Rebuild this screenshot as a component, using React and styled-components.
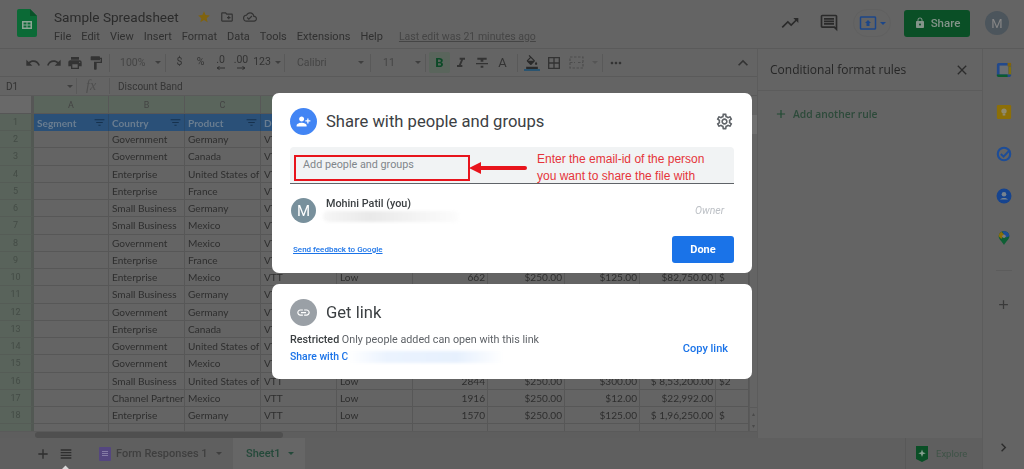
import React from 'react';
import styled, { createGlobalStyle } from 'styled-components';
import {
  MdAdd,
  MdBorderAll,
  MdChevronRight,
  MdClose,
  MdFilterList,
  MdFormatColorFill,
  MdFormatItalic,
  MdFormatPaint,
  MdFormatStrikethrough,
  MdKeyboardArrowUp,
  MdLink,
  MdLock,
  MdMoreHoriz,
  MdOutlineCloudDone,
  MdOutlineCreateNewFolder,
  MdOutlineInsertComment,
  MdOutlineSettings,
  MdPersonAddAlt1,
  MdPresentToAll,
  MdPrint,
  MdRedo,
  MdStar,
  MdTrendingUp,
  MdUndo,
  MdViewHeadline,
} from 'react-icons/md';

const GlobalStyle = createGlobalStyle`
  html, body {
    margin: 0;
    padding: 0;
    background: #666;
    overflow: hidden;
  }
  * { box-sizing: border-box; }
`;

const Page = styled.div`
  position: relative;
  width: 1024px;
  height: 469px;
  overflow: hidden;
  font-family: Roboto, "Liberation Sans", sans-serif;
`;

const Dimmed = styled.div`
  display: flex;
  flex-direction: column;
  width: 100%;
  height: 100%;
  background: #646464;
  color: #2a2a2a;
  filter: blur(0.45px);
`;

const Header = styled.header`
  display: flex;
  align-items: flex-start;
  flex: 0 0 49px;
  padding: 9px 15px 0 17px;
  border-bottom: 1px solid #5a5a5a;
`;

const Logo = styled.svg`
  width: 20px;
  height: 28px;
  margin-right: 17px;
  flex: none;
`;

const TitleBlock = styled.div`
  display: flex;
  flex-direction: column;
`;

const TitleRow = styled.div`
  display: flex;
  align-items: center;
  height: 15px;
  color: #333;
`;

const DocTitle = styled.span`
  width: 138px;
  font-size: 13.6px;
  color: #2b2b2b;
`;

const TitleIcon = styled.span`
  display: flex;
  justify-content: center;
  width: 23px;
  font-size: 14px;
  color: ${(p) => p.$color || '#333'};
`;

const MenuRow = styled.nav`
  display: flex;
  align-items: center;
  gap: 10px;
  margin-top: 6px;
  font-size: 11px;
  color: #303030;
`;

const LastEdit = styled.span`
  margin-left: 6px;
  font-size: 10.5px;
  color: #454545;
  text-decoration: underline;
`;

const HeaderRight = styled.div`
  display: flex;
  align-items: center;
  margin-left: auto;
  height: 28px;
`;

const HeaderIcon = styled.span`
  display: flex;
  justify-content: center;
  width: 39px;
  font-size: 20px;
  color: #2a2a2a;
`;

const PresentPill = styled.span`
  display: flex;
  align-items: center;
  justify-content: center;
  width: 38px;
  height: 28px;
  margin: 0 13px 0 5px;
  border: 1px solid #606060;
  border-radius: 14px;
  font-size: 18px;
  color: #1c4688;
`;

const TinyCaret = styled.span`
  display: inline-block;
  width: 0;
  height: 0;
  margin-left: 3px;
  border-left: 3px solid transparent;
  border-right: 3px solid transparent;
  border-top: 3px solid ${(p) => p.$color || '#3f3f3f'};
`;

const ShareButton = styled.span`
  display: flex;
  align-items: center;
  justify-content: center;
  gap: 5px;
  width: 66px;
  height: 27px;
  border-radius: 3px;
  background: #0a4f26;
  color: #84948a;
  font-size: 11.5px;
  font-weight: 500;
  svg { font-size: 12px; }
`;

const Avatar = styled.span`
  display: flex;
  align-items: center;
  justify-content: center;
  flex: none;
  width: ${(p) => p.$size}px;
  height: ${(p) => p.$size}px;
  border-radius: 50%;
  background: ${(p) => p.$bg};
  color: ${(p) => p.$fg};
  font-size: ${(p) => p.$font}px;
`;

const HeaderAvatar = styled(Avatar)`
  margin-left: 15px;
`;

const Workspace = styled.div`
  display: flex;
  flex: 1;
  min-height: 0;
`;

const LeftColumn = styled.div`
  display: flex;
  flex-direction: column;
  width: 982px;
`;

const UpperRow = styled.div`
  display: flex;
  flex: 1;
  min-height: 0;
`;

const Main = styled.main`
  display: flex;
  flex-direction: column;
  width: 757px;
`;

const Toolbar = styled.div`
  display: flex;
  align-items: center;
  flex: 0 0 28px;
  padding-left: 22px;
  border-bottom: 1px solid #5a5a5a;
  color: #303030;
`;

const Tool = styled.span`
  display: flex;
  flex-direction: column;
  align-items: center;
  justify-content: center;
  flex: none;
  width: ${(p) => p.$w || 21}px;
  height: 21px;
  font-size: ${(p) => p.$size || 16}px;
  font-weight: ${(p) => (p.$bold ? 700 : 400)};
  line-height: 1;
  color: ${(p) => p.$color || '#333'};
  background: ${(p) => p.$bg || 'transparent'};
  border-radius: 2px;
`;

const ToolLabel = styled.span`
  flex: none;
  width: ${(p) => p.$w}px;
  font-size: 10.5px;
  color: #454545;
`;

const ToolSep = styled.span`
  flex: none;
  width: 1px;
  height: 18px;
  margin: 0 ${(p) => p.$r}px 0 ${(p) => p.$l}px;
  background: #595959;
`;

const ChevronTool = styled(Tool)`
  margin: 0 3px 0 auto;
`;

const FillIcon = styled.span`
  display: flex;
  flex-direction: column;
  align-items: center;
  font-size: 14px;
  color: #2a2a2a;
  &::after {
    content: '';
    width: 16px;
    height: 2px;
    background: #2a5470;
  }
`;

const FormulaBar = styled.div`
  display: flex;
  align-items: center;
  flex: 0 0 19px;
  padding-left: 6px;
  border-bottom: 1px solid #5a5a5a;
  font-size: 10px;
  color: #333;
`;

const NameBox = styled.span`
  display: flex;
  align-items: center;
  justify-content: space-between;
  width: 67px;
  margin-right: 3px;
`;

const FormulaSep = styled.span`
  width: 1px;
  height: 16px;
  background: #5a5a5a;
`;

const Fx = styled.span`
  width: 32px;
  padding-left: 9px;
  font-family: "Liberation Serif", serif;
  font-style: italic;
  font-size: 14px;
  color: #4f4f4f;
`;

const FormulaText = styled.span`
  padding-left: 8px;
  color: #353535;
`;

const SheetArea = styled.div`
  display: flex;
  flex: 1;
  min-height: 0;
`;

const Sheet = styled.div`
  flex: 0 0 749px;
  display: grid;
  grid-template-columns: 34px 75px 76px 76px 76px 76px 75px 77px 75px 76px 33px;
  grid-template-rows: 18px 17px;
  grid-auto-rows: 17.25px;
  overflow: hidden;
  font-family: Lato, "Liberation Sans", sans-serif;
  font-size: 10.1px;
  color: #2e2e2e;
`;

const Corner = styled.div`
  background: #696969;
  border-right: 3px solid #565656;
  border-bottom: 1px solid #565656;
`;

const ColumnHead = styled.div`
  display: flex;
  align-items: center;
  justify-content: center;
  background: ${(p) => (p.$active ? '#5a655c' : '#646464')};
  border-right: 1px solid #575757;
  border-bottom: 1px solid #575757;
  font-family: Roboto, sans-serif;
  font-size: 9px;
  color: #444;
`;

const RowHead = styled.div`
  display: flex;
  align-items: center;
  justify-content: center;
  background: #59635b;
  border-right: 3px solid #525853;
  border-bottom: 1px solid #555c56;
  font-family: Roboto, sans-serif;
  font-size: 9px;
  color: #444c46;
`;

const Cell = styled.div`
  display: flex;
  align-items: center;
  justify-content: ${(p) => (p.$right ? 'flex-end' : 'flex-start')};
  padding: ${(p) => (p.$right ? '0 2px' : '0 0 0 3px')};
  white-space: nowrap;
  border-right: 1px solid #575757;
  border-bottom: 1px solid #575757;
`;

const BandCell = styled.div`
  display: flex;
  align-items: center;
  justify-content: space-between;
  padding: 0 2px 0 3px;
  background: #2a5078;
  border-right: 1px solid #294868;
  font-weight: 700;
  color: #6a7d90;
  white-space: nowrap;
  overflow: hidden;
  svg { flex: none; font-size: 13px; color: #16314d; }
`;

const ScrollColumn = styled.div`
  display: flex;
  flex-direction: column;
  flex: 0 0 8px;
  border-left: 1px solid #5a5a5a;
`;

const ScrollThumb = styled.div`
  height: 19px;
  margin-top: 19px;
  background: #707070;
`;

const ScrollArrows = styled.div`
  display: flex;
  flex-direction: column;
  justify-content: space-around;
  align-items: center;
  margin-top: auto;
  height: 24px;
  border-top: 1px solid #5a5a5a;
  font-size: 6px;
  color: #4a4a4a;
`;

const HScroll = styled.div`
  display: flex;
  flex: 0 0 7px;
  padding-left: 35px;
  background: #5e5e5e;
  border-top: 1px solid #5a5a5a;
`;

const HThumb = styled.div`
  width: 248px;
  height: 6px;
  border-radius: 3px;
  background: #4f4f4f;
`;

const SidePanel = styled.aside`
  display: flex;
  flex-direction: column;
  width: 225px;
  border-left: 1px solid #5c5c5c;
`;

const PanelHead = styled.div`
  display: flex;
  align-items: center;
  justify-content: space-between;
  flex: 0 0 42px;
  padding: 0 12px;
  border-bottom: 1px solid #5c5c5c;
  font-family: "Open Sans", sans-serif;
  font-size: 12px;
  font-weight: 500;
  color: #262626;
  svg { font-size: 16px; color: #2c2c2c; }
`;

const AddRule = styled.div`
  display: flex;
  align-items: center;
  gap: 5px;
  padding: 16px 0 0 16px;
  font-family: "Open Sans", sans-serif;
  font-size: 10.3px;
  font-weight: 600;
  color: #2d4a3a;
  svg { font-size: 14px; color: #204a32; }
`;

const TabBar = styled.footer`
  display: flex;
  align-items: center;
  flex: 0 0 31px;
  background: #5f5f5f;
  font-size: 11px;
`;

const TabTool = styled.span`
  position: relative;
  display: flex;
  justify-content: center;
  width: 23px;
  font-size: 16px;
  color: #2e2e2e;
`;

const AddSheet = styled(TabTool)`
  margin-left: 31px;
`;

const ListNotch = styled.span`
  position: absolute;
  left: 8px;
  bottom: -12px;
  width: 7px;
  height: 7px;
  background: #d8d8d8;
  transform: rotate(45deg);
`;

const TabItem = styled.div`
  display: flex;
  align-items: center;
  gap: 5px;
  height: 100%;
  background: ${(p) => (p.$active ? '#666' : 'transparent')};
  font-weight: 500;
  color: ${(p) => (p.$active ? '#24493a' : '#3f3f3f')};
`;

const FormTab = styled(TabItem)`
  width: 156px;
  padding-left: 22px;
`;

const SheetTab = styled(TabItem)`
  width: 72px;
  padding-left: 13px;
`;

const FormBadge = styled.span`
  display: flex;
  flex-direction: column;
  justify-content: center;
  gap: 1px;
  width: 12px;
  height: 14px;
  padding: 0 3px;
  border-radius: 1px;
  background: #54467f;
  i { height: 1px; background: #857ca6; }
`;

const ExploreBox = styled.div`
  display: flex;
  align-items: center;
  gap: 8px;
  height: 100%;
  margin-left: auto;
  width: 77px;
  padding-left: 10px;
  border-left: 1px solid #585858;
  font-size: 9.5px;
  color: #3f5347;
`;

const Rail = styled.div`
  display: flex;
  flex-direction: column;
  align-items: center;
  width: 42px;
  border-left: 1px solid #5c5c5c;
  padding-top: 13px;
`;

const RailIcon = styled.svg`
  width: 16px;
  height: 16px;
  margin-bottom: 26px;
  flex: none;
`;

const RailLine = styled.span`
  width: 16px;
  height: 1px;
  margin-top: -2px;
  background: #5c5c5c;
`;

const RailAdd = styled.span`
  display: flex;
  margin-top: 26px;
  font-size: 15px;
  color: #3a3a3a;
`;

const RailChevron = styled.span`
  display: flex;
  margin-top: auto;
  margin-bottom: 13px;
  font-size: 17px;
  color: #2c2c2c;
`;

/* the two share dialogs float over the dimmed sheet */
const Overlay = styled.div`
  position: absolute;
  inset: 0;
  display: flex;
  flex-direction: column;
  gap: 11px;
  padding: 93px 0 0 272px;
  filter: blur(0.3px);
`;

const Card = styled.section`
  display: flex;
  flex-direction: column;
  width: 480px;
  height: ${(p) => p.$h}px;
  padding: 14px 18px 0;
  background: #fff;
  border-radius: 7px;
`;

const CardHead = styled.div`
  display: flex;
  align-items: center;
  gap: 9px;
  height: 28px;
`;

const CircleIcon = styled.span`
  display: flex;
  align-items: center;
  justify-content: center;
  width: 27px;
  height: 27px;
  border-radius: 50%;
  background: ${(p) => p.$bg};
  color: #fff;
  font-size: 15px;
`;

const CardTitle = styled.h2`
  margin: 1px 0 0;
  font-size: 16.6px;
  font-weight: 400;
  color: #3c4043;
`;

const GearIcon = styled.span`
  display: flex;
  margin-left: auto;
  font-size: 19px;
  color: #5f6368;
`;

const InviteBox = styled.div`
  position: relative;
  height: 37px;
  margin-top: 12px;
  padding: 11px 0 0 13px;
  background: #f1f3f4;
  border-bottom: 1px solid #5f6368;
  border-radius: 4px 4px 0 0;
  font-size: 10.8px;
  color: #80868b;
`;

const RedFrame = styled.span`
  position: absolute;
  left: 4px;
  top: 8px;
  width: 176px;
  height: 26px;
  border: 2px solid #e8141c;
`;

const RedArrow = styled.svg`
  position: absolute;
  left: 179px;
  top: 14px;
  width: 58px;
  height: 14px;
`;

const RedNote = styled.p`
  position: absolute;
  left: 247px;
  top: 4px;
  margin: 0;
  font-family: "Liberation Sans", Arial, sans-serif;
  font-size: 12px;
  line-height: 17px;
  color: #e5333a;
`;

const PersonRow = styled.div`
  display: flex;
  align-items: center;
  gap: 10px;
  margin-top: 14px;
  padding-left: 1px;
`;

const PersonInfo = styled.div`
  display: flex;
  flex-direction: column;
  width: 340px;
  margin-top: -3px;
`;

const PersonName = styled.span`
  font-size: 10.8px;
  font-weight: 500;
  color: #3c4043;
`;

const SmudgedEmail = styled.span`
  width: 136px;
  height: 11px;
  margin: 1px 0 0 -3px;
  border-radius: 5px;
  background: linear-gradient(90deg, #f6f6f6 0%, #e9e9e9 35%, #f4f4f4 70%, #fcfcfc 100%);
  filter: blur(1.5px);
`;

const OwnerTag = styled.span`
  margin-left: 19px;
  font-size: 10.5px;
  font-style: italic;
  color: #bdc1c6;
`;

const CardFoot = styled.div`
  display: flex;
  align-items: center;
  justify-content: space-between;
  margin-top: 13px;
`;

const FeedbackLink = styled.a`
  padding-left: 3px;
  font-size: 8px;
  font-weight: 500;
  color: #1a73e8;
  text-decoration: underline;
`;

const DoneButton = styled.button`
  width: 62px;
  height: 27px;
  padding: 0;
  border: 0;
  border-radius: 3px;
  background: #1a73e8;
  font-family: Roboto, sans-serif;
  font-size: 11px;
  font-weight: 700;
  color: #fff;
`;

const LinkBody = styled.div`
  display: flex;
  align-items: center;
  justify-content: space-between;
  margin-top: 7px;
  padding-right: 6px;
`;

const LinkText = styled.div`
  display: flex;
  flex-direction: column;
  gap: 4px;
  font-size: 10.75px;
  color: #5f6368;
  strong { font-weight: 500; color: #3c4043; }
`;

const ShareWith = styled.span`
  display: flex;
  align-items: center;
  font-size: 10.4px;
  font-weight: 500;
  color: #1a73e8;
`;

const SmudgedLink = styled.span`
  width: 155px;
  height: 12px;
  background: linear-gradient(90deg, #fff 0%, #ebf3fe 25%, #e6f0fd 70%, #fff 100%);
  filter: blur(1.5px);
`;

const CopyLink = styled.span`
  font-size: 11px;
  font-weight: 500;
  color: #1a73e8;
`;

const COLUMNS = ['A', 'B', 'C', 'D', 'E', 'F', 'G', 'H', 'I', 'J'];

// segment, product, band, discount, units, price, cost, sales, next column
const ROWS = [
  ['Government', 'Germany', 'VTT'],
  ['Government', 'Canada', 'VTT'],
  ['Enterprise', 'United States of', 'VTT'],
  ['Enterprise', 'France', 'VTT'],
  ['Small Business', 'Germany', 'VTT'],
  ['Small Business', 'Mexico', 'VTT'],
  ['Government', 'Mexico', 'VTT'],
  ['Enterprise', 'France', 'VTT'],
  ['Enterprise', 'Mexico', 'VTT', 'Low', '662', '$250.00', '$125.00', '$82,750.00', '$'],
  ['Small Business', 'Germany', 'VTT'],
  ['Government', 'Germany', 'VTT'],
  ['Enterprise', 'Canada', 'VTT'],
  ['Government', 'United States of', 'VTT'],
  ['Government', 'Mexico', 'VTT'],
  ['Small Business', 'United States of', 'VTT', 'Low', '2844', '$250.00', '$300.00', '$ 8,53,200.00', '$2'],
  ['Channel Partner', 'Mexico', 'VTT', 'Low', '1916', '$250.00', '$12.00', '$22,992.00'],
  ['Enterprise', 'Germany', 'VTT', 'Low', '1570', '$250.00', '$125.00', '$ 1,96,250.00', '$'],
  [],
];

const SheetRow = ({ number, row }) => {
  const [segment, product, band, discount, units, price, cost, sales, extra] = row;
  return (
    <>
      <RowHead>{number}</RowHead>
      <Cell />
      <Cell>{segment}</Cell>
      <Cell>{product}</Cell>
      <Cell>{band}</Cell>
      <Cell>{discount}</Cell>
      <Cell $right>{units}</Cell>
      <Cell $right>{price}</Cell>
      <Cell $right>{cost}</Cell>
      <Cell $right>{sales}</Cell>
      <Cell>{extra}</Cell>
    </>
  );
};

const Spreadsheet = () => (
  <Sheet>
    <Corner />
    {COLUMNS.map((c, i) => (
      <ColumnHead key={c} $active={i < 4}>{c}</ColumnHead>
    ))}
    <RowHead>1</RowHead>
    <BandCell>Segment<MdFilterList /></BandCell>
    <BandCell>Country<MdFilterList /></BandCell>
    <BandCell>Product<MdFilterList /></BandCell>
    <BandCell>Discount Band</BandCell>
    {COLUMNS.slice(4).map((c) => <BandCell key={c} />)}
    {ROWS.map((row, i) => <SheetRow key={i} number={row.length ? i + 2 : ''} row={row} />)}
  </Sheet>
);

const DecimalArrow = ({ flip }) => (
  <svg width="9" height="4" viewBox="0 0 9 4">
    <path d={flip ? 'M0 2h7M5.500 0.500L8 2 5.500 3.500' : 'M9 2H2M3.500 0.500L1 2l2.500 1.500'} stroke="#2e2e2e" fill="none" />
  </svg>
);

const MergeIcon = () => (
  <svg width="15" height="13" viewBox="0 0 15 13" fill="none" stroke="#4d4d4d" strokeWidth="1.200" strokeDasharray="2.500 1.500">
    <path d="M1 1h13v11H1z" />
    <path d="M1 6.500h5M9 6.500h5" />
  </svg>
);

const App = () => (
  <>
    <GlobalStyle />
    <Page>
      <Dimmed>
        <Header>
          <Logo viewBox="0 0 20 28">
            <path d="M2 0h11l7 7v19a2 2 0 0 1-2 2H2a2 2 0 0 1-2-2V2a2 2 0 0 1 2-2z" fill="#0b6a36" />
            <path d="M13 0l7 7h-7z" fill="#0a5229" />
            <path d="M5 12h10v8H5z M6.500 13.500v2h3v-2z M10.500 13.500v2h3v-2z M6.500 16.500v2h3v-2z M10.500 16.500v2h3v-2z" fill="#8fa596" fillRule="evenodd" />
          </Logo>
          <TitleBlock>
            <TitleRow>
              <DocTitle>Sample Spreadsheet</DocTitle>
              <TitleIcon $color="#80630f"><MdStar /></TitleIcon>
              <TitleIcon><MdOutlineCreateNewFolder /></TitleIcon>
              <TitleIcon><MdOutlineCloudDone /></TitleIcon>
            </TitleRow>
            <MenuRow>
              <span>File</span>
              <span>Edit</span>
              <span>View</span>
              <span>Insert</span>
              <span>Format</span>
              <span>Data</span>
              <span>Tools</span>
              <span>Extensions</span>
              <span>Help</span>
              <LastEdit>Last edit was 21 minutes ago</LastEdit>
            </MenuRow>
          </TitleBlock>
          <HeaderRight>
            <HeaderIcon><MdTrendingUp /></HeaderIcon>
            <HeaderIcon><MdOutlineInsertComment /></HeaderIcon>
            <PresentPill><MdPresentToAll /><TinyCaret $color="#1c4688" /></PresentPill>
            <ShareButton><MdLock />Share</ShareButton>
            <HeaderAvatar $size={24} $bg="#4c555c" $fg="#858585" $font={13}>M</HeaderAvatar>
          </HeaderRight>
        </Header>
        <Workspace>
          <LeftColumn>
            <UpperRow>
              <Main>
                <Toolbar>
                  <Tool><MdUndo /></Tool>
                  <Tool><MdRedo /></Tool>
                  <Tool><MdPrint /></Tool>
                  <Tool><MdFormatPaint /></Tool>
                  <ToolSep $l={3} $r={10} />
                  <ToolLabel $w={30}>100%</ToolLabel>
                  <Tool $w={12}><TinyCaret /></Tool>
                  <ToolSep $l={3} $r={3} />
                  <Tool $size={10.5}>$</Tool>
                  <Tool $size={10.5}>%</Tool>
                  <Tool $w={19} $size={10.5}>.0<DecimalArrow /></Tool>
                  <Tool $w={22} $size={10.5}>.00<DecimalArrow flip /></Tool>
                  <Tool $w={20} $size={10.5}>123</Tool>
                  <Tool $w={8}><TinyCaret /></Tool>
                  <ToolSep $l={4} $r={12} />
                  <ToolLabel $w={56}>Calibri</ToolLabel>
                  <Tool $w={12}><TinyCaret /></Tool>
                  <ToolSep $l={5} $r={12} />
                  <ToolLabel $w={27}>11</ToolLabel>
                  <Tool $w={12}><TinyCaret /></Tool>
                  <ToolSep $l={3} $r={3} />
                  <Tool $size={13} $bold $color="#0c4a27" $bg="#5a655c">B</Tool>
                  <Tool><MdFormatItalic /></Tool>
                  <Tool><MdFormatStrikethrough /></Tool>
                  <Tool $size={13}>A</Tool>
                  <ToolSep $l={4} $r={3} />
                  <Tool $w={22}><FillIcon><MdFormatColorFill /></FillIcon></Tool>
                  <Tool $w={22}><MdBorderAll /></Tool>
                  <Tool $w={22}><MergeIcon /></Tool>
                  <Tool $w={12}><TinyCaret $color="#555" /></Tool>
                  <ToolSep $l={3} $r={2} />
                  <Tool $w={22}><MdMoreHoriz /></Tool>
                  <ChevronTool $w={22} $size={20}><MdKeyboardArrowUp /></ChevronTool>
                </Toolbar>
                <FormulaBar>
                  <NameBox>D1<TinyCaret /></NameBox>
                  <FormulaSep />
                  <Fx>fx</Fx>
                  <FormulaSep />
                  <FormulaText>Discount Band</FormulaText>
                </FormulaBar>
                <SheetArea>
                  <Spreadsheet />
                  <ScrollColumn>
                    <ScrollThumb />
                    <ScrollArrows><span>▴</span><span>▾</span></ScrollArrows>
                  </ScrollColumn>
                </SheetArea>
                <HScroll><HThumb /></HScroll>
              </Main>
              <SidePanel>
                <PanelHead>Conditional format rules<MdClose /></PanelHead>
                <AddRule><MdAdd />Add another rule</AddRule>
              </SidePanel>
            </UpperRow>
            <TabBar>
              <AddSheet><MdAdd /></AddSheet>
              <TabTool><MdViewHeadline /><ListNotch /></TabTool>
              <FormTab>
                <FormBadge><i /><i /><i /></FormBadge>
                Form Responses 1
                <TinyCaret />
              </FormTab>
              <SheetTab $active>Sheet1<TinyCaret $color="#24493a" /></SheetTab>
              <ExploreBox>
                <svg width="12" height="16" viewBox="0 0 12 16">
                  <path d="M0 0h12v13l-6 3-6-3z" fill="#0a4f26" />
                  <path d="M6 3.500l1 2.700 2.700 1-2.700 1-1 2.700-1-2.700-2.700-1 2.700-1z" fill="#86a090" />
                </svg>
                Explore
              </ExploreBox>
            </TabBar>
          </LeftColumn>
          <Rail>
            <RailIcon viewBox="0 0 18 18">
              <rect x="1" y="1" width="16" height="16" rx="2" fill="#22498c" />
              <rect x="4" y="4" width="10" height="10" fill="#6b6f74" />
              <path d="M13 1h4v4h-4z" fill="#80630f" />
              <path d="M1 14h12v3H3a2 2 0 0 1-2-2z" fill="#0b5c30" />
              <path d="M14 5h3v9h-3z" fill="#806f10" />
            </RailIcon>
            <RailIcon viewBox="0 0 18 18">
              <rect x="1" y="1" width="16" height="16" rx="1.500" fill="#8c6f08" />
              <circle cx="9" cy="8" r="3" fill="#8f8a70" />
              <rect x="7.500" y="11" width="3" height="2" fill="#8f8a70" />
            </RailIcon>
            <RailIcon viewBox="0 0 18 18">
              <circle cx="9" cy="9" r="7" fill="none" stroke="#1d4d98" strokeWidth="2.400" />
              <path d="M5.500 9l3 3 7-7.500" fill="none" stroke="#1d4d98" strokeWidth="2.200" />
            </RailIcon>
            <RailIcon viewBox="0 0 18 18">
              <circle cx="9" cy="9" r="8.400" fill="#16448f" />
              <circle cx="9" cy="7" r="2.600" fill="#77838f" />
              <path d="M4.500 13c1-2.400 8-2.400 9 0z" fill="#77838f" />
            </RailIcon>
            <RailIcon viewBox="0 0 18 18">
              <path d="M9 1a6 6 0 0 1 6 6c0 3.500-4 6-6 10-2-4-6-6.500-6-10a6 6 0 0 1 6-6z" fill="#0e5f34" />
              <path d="M9 1a6 6 0 0 1 6 6l-3.500 1.500L7 2z" fill="#1d4d98" />
              <path d="M3 7a6 6 0 0 1 3-5l3 3-3 5z" fill="#8c6f08" />
              <circle cx="9" cy="7" r="2" fill="#7d7d7d" />
            </RailIcon>
            <RailLine />
            <RailAdd><MdAdd /></RailAdd>
            <RailChevron><MdChevronRight /></RailChevron>
          </Rail>
        </Workspace>
      </Dimmed>
      <Overlay>
        <Card $h={180}>
          <CardHead>
            <CircleIcon $bg="#4285f4"><MdPersonAddAlt1 /></CircleIcon>
            <CardTitle>Share with people and groups</CardTitle>
            <GearIcon><MdOutlineSettings /></GearIcon>
          </CardHead>
          <InviteBox>
            Add people and groups
            <RedFrame />
            <RedArrow viewBox="0 0 58 14">
              <path d="M0 7l12-6v4h44a2 2 0 0 1 0 4H12v4z" fill="#e8141c" />
            </RedArrow>
            <RedNote>Enter the email-id of the person<br />you want to share the file with</RedNote>
          </InviteBox>
          <PersonRow>
            <Avatar $size={25} $bg="#78909c" $fg="#fff" $font={15}>M</Avatar>
            <PersonInfo>
              <PersonName>Mohini Patil (you)</PersonName>
              <SmudgedEmail />
            </PersonInfo>
            <OwnerTag>Owner</OwnerTag>
          </PersonRow>
          <CardFoot>
            <FeedbackLink>Send feedback to Google</FeedbackLink>
            <DoneButton>Done</DoneButton>
          </CardFoot>
        </Card>
        <Card $h={95}>
          <CardHead>
            <CircleIcon $bg="#9aa0a6"><MdLink /></CircleIcon>
            <CardTitle>Get link</CardTitle>
          </CardHead>
          <LinkBody>
            <LinkText>
              <span><strong>Restricted</strong> Only people added can open with this link</span>
              <ShareWith>Share with C<SmudgedLink /></ShareWith>
            </LinkText>
            <CopyLink>Copy link</CopyLink>
          </LinkBody>
        </Card>
      </Overlay>
    </Page>
  </>
);

export default App;
